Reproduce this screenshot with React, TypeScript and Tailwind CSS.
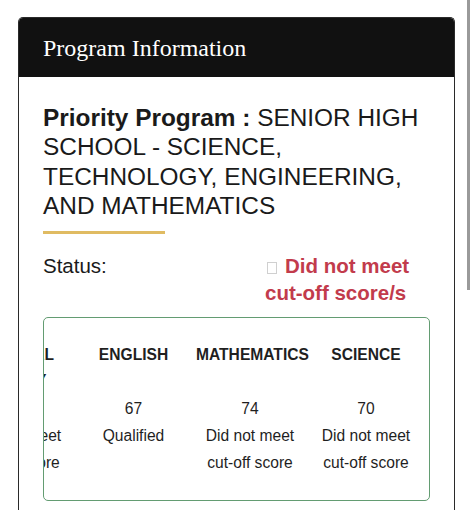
import React from "react";

const subjects = [
  { name: "GENERAL ABILITY", score: "", result: "Did not meet cut-off score" },
  { name: "ENGLISH", score: "67", result: "Qualified" },
  { name: "MATHEMATICS", score: "74", result: "Did not meet cut-off score" },
  { name: "SCIENCE", score: "70", result: "Did not meet cut-off score" },
];

export default function App() {
  return (
    <div className="relative min-h-[510px] bg-white pt-[17px] pl-[18px] pr-[19px] font-['Liberation_Sans',Arial,sans-serif] text-[#1a1a1a]">
      <div className="rounded-t-[5px] border-[1.5px] border-[#2a2a2a] border-b-0 min-h-[500px]">
        <div className="bg-[#111111] h-[59px] flex items-center pl-[24px] rounded-t-[4px]">
          <h2 className="font-['Liberation_Serif','Times_New_Roman',serif] text-white text-[24px] leading-none">
            Program Information
          </h2>
        </div>

        <div className="px-[24px] pt-[26px]">
          <h1 className="text-[24.4px] leading-[29.3px] text-[#1a1a1a]">
            <span className="font-bold">Priority Program :</span> SENIOR HIGH SCHOOL - SCIENCE,
            TECHNOLOGY, ENGINEERING, AND MATHEMATICS
          </h1>
          <div className="mt-[11px] h-[3px] w-[122px] bg-[#e0bb62]" />

          <div className="mt-[18px] grid grid-cols-[222px_1fr] text-[20.5px] leading-[27px]">
            <div>Status:</div>
            <div className="font-bold text-[#c23b4c]">
              <span className="inline-block w-[10px] h-[12px] border border-[#d0d0d0] ml-[2px] mr-[8px] align-[-1px]" />
              Did not meet cut-off score/s
            </div>
          </div>

          <div className="mt-[11px] h-[184px] rounded-[5px] border-[1.5px] border-[#639c72] overflow-hidden">
            <div className="-ml-[75px] grid grid-cols-[106px_117px_116px_116px] text-center text-[15.6px] text-[#1f1f1f]">
              {subjects.map((s, i) => (
                <div
                  key={s.name}
                  className={`pt-[24px] leading-[26px] font-bold h-[77px] ${
                    i === 0 ? "pl-[0px] pr-[12px]" : "px-[4px]"
                  }`}
                >
                  {s.name}
                </div>
              ))}
              {subjects.map((s, i) => (
                <div
                  key={s.name + "-v"}
                  className={`leading-[27px] ${i === 0 ? "pl-[0px] pr-[10px]" : "px-[4px]"}`}
                >
                  <div className="h-[27px]">{s.score}</div>
                  <div>{s.result}</div>
                </div>
              ))}
            </div>
          </div>
        </div>
      </div>

      <div className="absolute right-[4px] top-0 w-[3px] h-[290px] bg-[#9a9a9a]" />
    </div>
  );
}
